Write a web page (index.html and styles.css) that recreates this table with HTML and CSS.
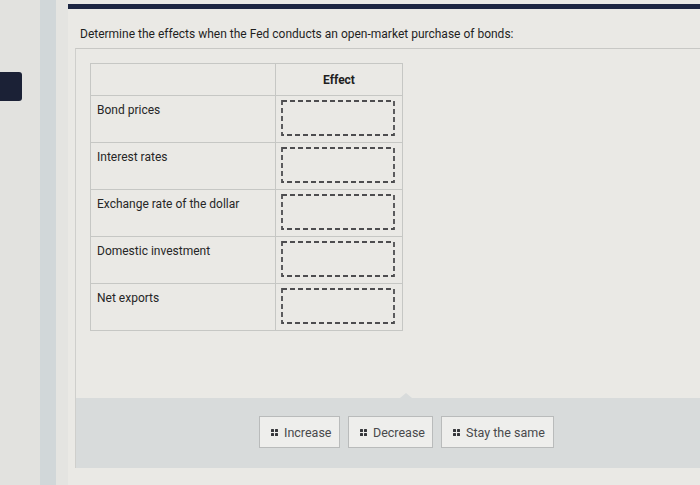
FILE: index.html
```html
<!DOCTYPE html>
<html>
<head>
<meta charset="utf-8">
<link rel="stylesheet" href="styles.css">
</head>
<body>
<div class="app">
  <aside class="sidebar"><div class="side-tab"></div></aside>
  <div class="rail"></div>
  <div class="gutter"></div>
  <main class="main">
    <div class="topbar"></div>
    <p class="title">Determine the effects when the Fed conducts an open-market purchase of bonds:</p>
    <section class="card">
      <div class="table-wrap">
        <table class="grid">
          <thead>
            <tr><th class="label-col"></th><th class="effect-col">Effect</th></tr>
          </thead>
          <tbody>
            <tr><td class="label">Bond prices</td><td class="drop-cell"><div class="drop"><svg width="114" height="36" viewBox="0 0 114 36"><rect x="1" y="1" width="112" height="34" fill="none" stroke="#4d4d4f" stroke-width="1.8" stroke-dasharray="5 3"/></svg></div></td></tr>
            <tr><td class="label">Interest rates</td><td class="drop-cell"><div class="drop"><svg width="114" height="36" viewBox="0 0 114 36"><rect x="1" y="1" width="112" height="34" fill="none" stroke="#4d4d4f" stroke-width="1.8" stroke-dasharray="5 3"/></svg></div></td></tr>
            <tr><td class="label">Exchange rate of the dollar</td><td class="drop-cell"><div class="drop"><svg width="114" height="36" viewBox="0 0 114 36"><rect x="1" y="1" width="112" height="34" fill="none" stroke="#4d4d4f" stroke-width="1.8" stroke-dasharray="5 3"/></svg></div></td></tr>
            <tr><td class="label">Domestic investment</td><td class="drop-cell"><div class="drop"><svg width="114" height="36" viewBox="0 0 114 36"><rect x="1" y="1" width="112" height="34" fill="none" stroke="#4d4d4f" stroke-width="1.8" stroke-dasharray="5 3"/></svg></div></td></tr>
            <tr><td class="label">Net exports</td><td class="drop-cell"><div class="drop"><svg width="114" height="36" viewBox="0 0 114 36"><rect x="1" y="1" width="112" height="34" fill="none" stroke="#4d4d4f" stroke-width="1.8" stroke-dasharray="5 3"/></svg></div></td></tr>
          </tbody>
        </table>
      </div>
      <div class="band">
        <span class="notch"></span>
        <button class="chip chip-inc"><span class="grip"><i></i><i></i><i></i><i></i></span>Increase</button>
        <button class="chip chip-dec"><span class="grip"><i></i><i></i><i></i><i></i></span>Decrease</button>
        <button class="chip chip-same"><span class="grip"><i></i><i></i><i></i><i></i></span>Stay the same</button>
      </div>
    </section>
  </main>
</div>
</body>
</html>
```
FILE: styles.css
```css
* { box-sizing: border-box; }
html, body { margin: 0; padding: 0; }
body {
  background: #e3e3e0;
  font-family: Roboto, "Liberation Sans", Arial, sans-serif;
  color: #2a2a2a;
  width: 700px;
  height: 485px;
  overflow: hidden;
}
.app {
  display: flex;
  height: 485px;
}
.sidebar {
  width: 40px;
  flex: none;
  padding-top: 72px;
  background: #e2e2df;
}
.side-tab {
  width: 22px;
  height: 29px;
  background: #1b2136;
  border-radius: 0 3px 3px 0;
}
.rail {
  width: 16px;
  flex: none;
  background: #d1d7d9;
}
.gutter {
  width: 12px;
  flex: none;
  background: #e4e4e1;
}
.main {
  flex: 1;
  display: flex;
  flex-direction: column;
  background: #eae9e5;
}
.topbar {
  height: 5px;
  margin-top: 4px;
  background: #1d2642;
}
.title {
  margin: 0;
  padding: 17px 0 0 12px;
  height: 39px;
  font-size: 12px;
  line-height: 16px;
  color: #1f1f1f;
}
.card {
  margin-left: 7px;
  border-top: 1px solid #c8c8c5;
  border-left: 1px solid #cfcfcc;
  display: flex;
  flex-direction: column;
  height: 420px;
}
.table-wrap {
  padding: 14px 0 0 14px;
  height: 349px;
}
.grid {
  border-collapse: collapse;
  width: 312px;
  table-layout: fixed;
}
.grid th, .grid td {
  border: 1px solid #c6c7c4;
  padding: 0;
}
.label-col { width: 185px; }
.effect-col {
  width: 127px;
  height: 32px;
  font-size: 12px;
  font-weight: 700;
  color: #1f1f1f;
  text-align: center;
  vertical-align: middle;
}
.grid tbody tr { height: 47px; }
.label {
  font-size: 12px;
  line-height: 14px;
  color: #262626;
  vertical-align: top;
  padding: 7px 0 0 6px !important;
}
.drop-cell {
  vertical-align: top;
}
.drop {
  width: 114px;
  height: 36px;
  margin: 4px 0 0 5px;
}
.drop svg { display: block; }
.band {
  position: relative;
  height: 70px;
  background: #d8dbdb;
  display: flex;
  align-items: flex-start;
  padding: 18px 0 0 183px;
  gap: 8px;
}
.notch {
  position: absolute;
  left: 324px;
  top: -5px;
  width: 0;
  height: 0;
  border-left: 6px solid transparent;
  border-right: 6px solid transparent;
  border-bottom: 5px solid #d8dbdb;
}
.chip {
  height: 32px;
  display: flex;
  align-items: center;
  gap: 6px;
  padding: 0 0 0 11px;
  border: 1px solid #b9bbbb;
  background: #eeeeec;
  font-family: Roboto, "Liberation Sans", Arial, sans-serif;
  font-size: 12.5px;
  color: #48494b;
  border-radius: 0;
}
.chip-inc { width: 81px; }
.chip-dec { width: 85px; }
.chip-same { width: 113px; }
.grip {
  display: grid;
  grid-template-columns: 3px 3px;
  gap: 1px;
  width: 7px;
}
.grip i {
  display: block;
  width: 3px;
  height: 3px;
  background: #35363a;
  border-radius: 0.5px;
}
```
